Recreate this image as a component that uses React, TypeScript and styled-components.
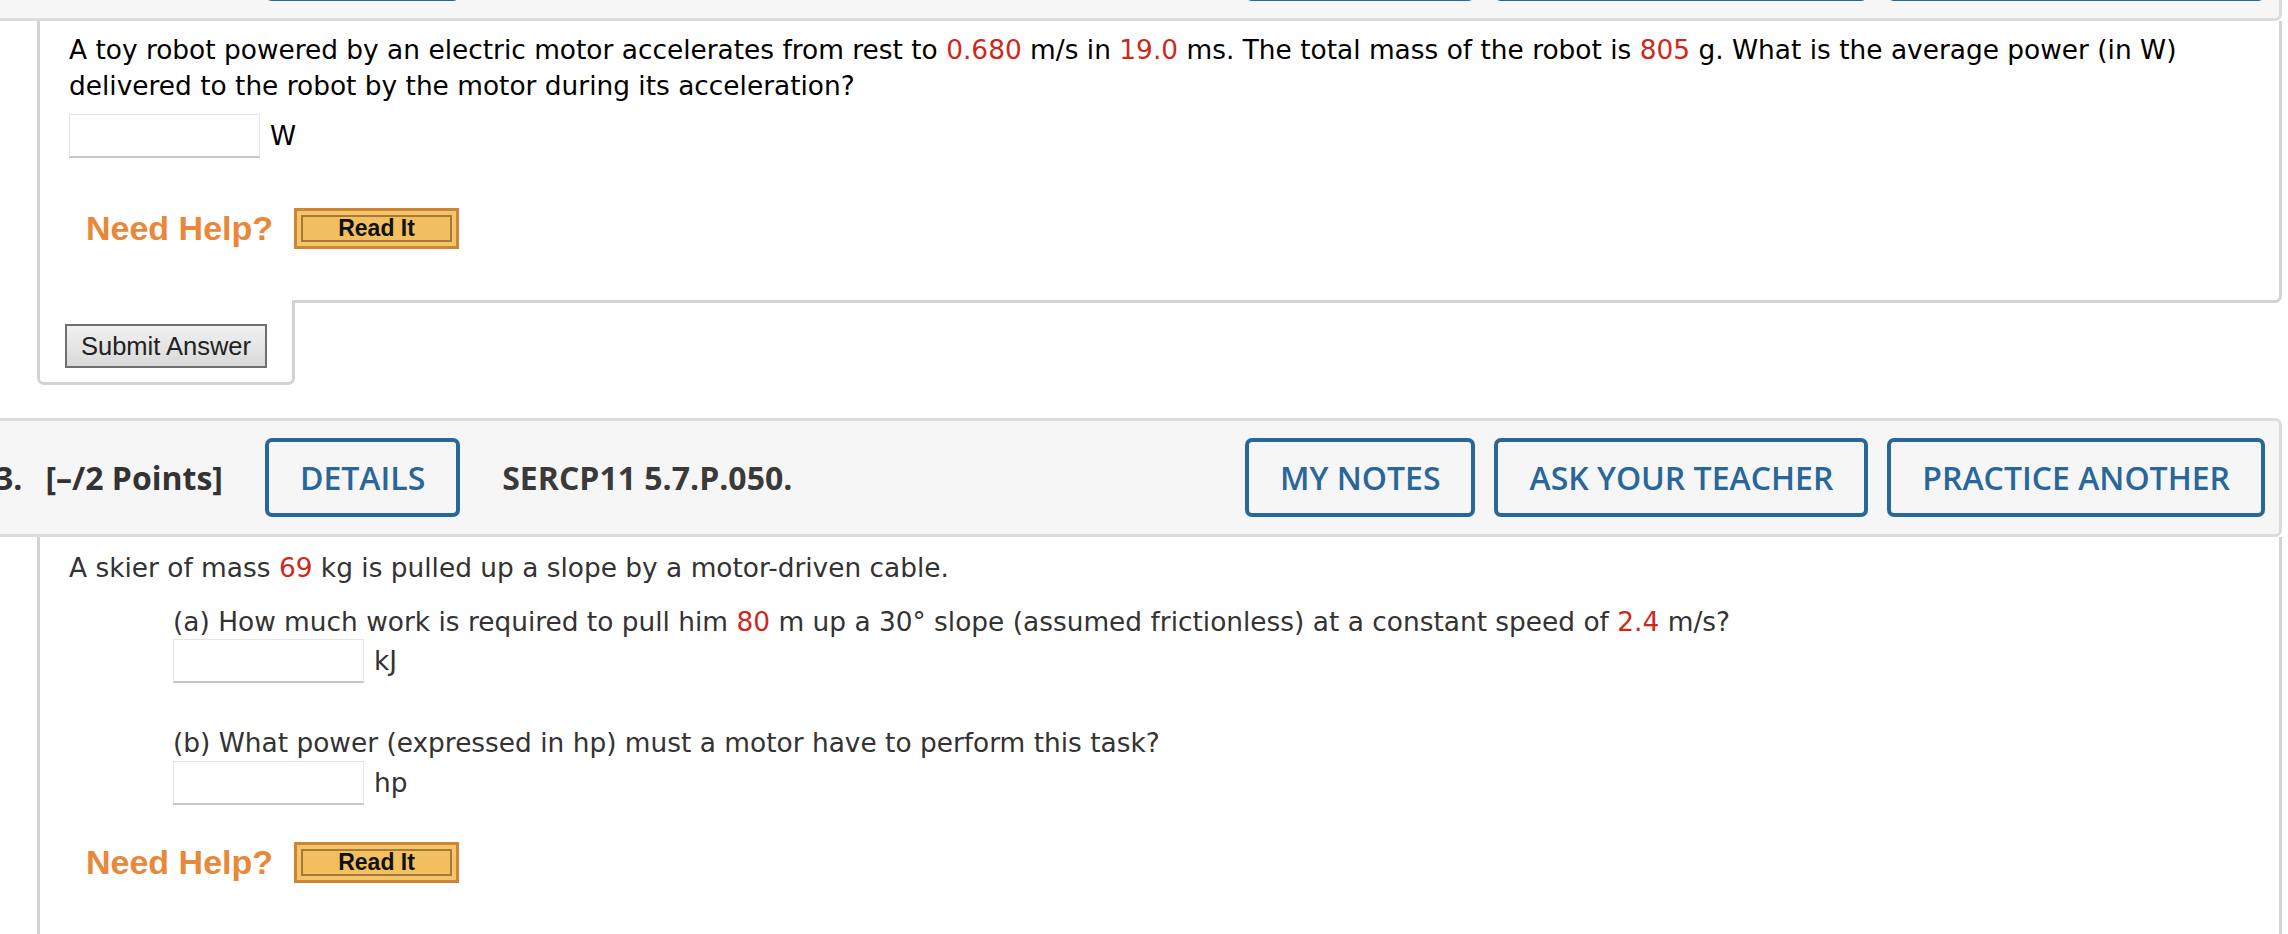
import { createGlobalStyle } from 'styled-components'
import styled from 'styled-components'

const BLUE = '#29669a'
const RED = '#d0271d'
const LINE = '#d3d3d3'
const BAND = '#dcdcdc'

const GlobalStyle = createGlobalStyle`
  html, body {
    margin: 0;
    padding: 0;
    background: #fff;
    overflow: hidden;
  }
  body {
    font-family: "DejaVu Sans", Verdana, sans-serif;
  }
`

const Page = styled.div`
  width: 2288px;
  height: 934px;
  overflow: hidden;
`

const Header = styled.div<{ $offset?: number }>`
  display: flex;
  align-items: center;
  height: 113px;
  margin-top: ${p => p.$offset ?? 0}px;
  margin-right: 6px;
  background: #f6f6f6;
  border: 3px solid ${BAND};
  border-left: none;
  border-radius: 0 7px 7px 0;
  font-family: "Open Sans", sans-serif;
  color: #333;
`

const QNumber = styled.span`
  margin-left: -5px;
  font-size: 32px;
  font-weight: 700;
  color: #333;
`

const Points = styled.span`
  margin-left: 23px;
  margin-right: 42px;
  font-size: 32px;
  font-weight: 700;
  color: #333;
`

const Code = styled.span`
  margin-left: 42px;
  font-size: 32px;
  font-weight: 700;
  color: #3a3a3a;
`

const Actions = styled.div`
  display: flex;
  gap: 19px;
  margin-left: auto;
  padding-right: 14px;
`

const HeadButton = styled.button`
  box-sizing: border-box;
  height: 79px;
  padding: 0 31px;
  background: transparent;
  border: 4px solid ${BLUE};
  border-radius: 7px;
  color: ${BLUE};
  font-family: "Open Sans", sans-serif;
  font-size: 32px;
  font-weight: 600;
  cursor: pointer;
`

const Body = styled.div<{ $top: number; $open?: boolean }>`
  margin-left: 37px;
  margin-right: 6px;
  padding: ${p => p.$top}px 28px 51px 29px;
  border-left: 3px solid ${LINE};
  border-right: 3px solid ${LINE};
  border-bottom: ${p => (p.$open ? 'none' : `3px solid ${LINE}`)};
  border-bottom-right-radius: ${p => (p.$open ? 0 : 7)}px;
  background: #fff;
`

const Prompt = styled.p<{ $dark?: boolean; $indent?: number; $gap?: number }>`
  margin: ${p => p.$gap ?? 0}px 0 0 ${p => p.$indent ?? 0}px;
  font-size: 26.4px;
  line-height: 36px;
  color: ${p => (p.$dark ? '#000' : '#333')};
`

const Val = styled.span`
  color: ${RED};
`

const AnswerRow = styled.div<{ $gap: number; $indent?: number; $dark?: boolean }>`
  display: flex;
  align-items: center;
  gap: 10px;
  margin: ${p => p.$gap}px 0 0 ${p => p.$indent ?? 0}px;
  font-size: 26.4px;
  line-height: 36px;
  color: ${p => (p.$dark ? '#000' : '#333')};
`

const AnswerBox = styled.input`
  box-sizing: border-box;
  width: 191px;
  height: 44px;
  margin: 0;
  border: 1px solid #e4e4e4;
  border-bottom: 2px solid #c6c6c6;
  background: #fff;
  outline: none;
`

const HelpRow = styled.div<{ $gap: number }>`
  display: flex;
  align-items: center;
  gap: 21px;
  margin-top: ${p => p.$gap}px;
  padding-left: 17px;
`

const HelpLabel = styled.span`
  font-family: "Liberation Sans", Arial, sans-serif;
  font-size: 34px;
  font-weight: 700;
  color: #e8883a;
`

const ReadIt = styled.button`
  box-sizing: border-box;
  width: 165px;
  height: 41px;
  padding: 0;
  border: 3px solid #cf8536;
  background: #f2c060;
  box-shadow: inset 0 0 0 4px #f4c668, inset 0 0 0 6px #a8773c;
  font-family: "Liberation Sans", Arial, sans-serif;
  font-size: 23px;
  font-weight: 700;
  color: #111;
  cursor: pointer;
`

const SubmitTab = styled.div`
  box-sizing: border-box;
  width: 258px;
  margin: -3px 0 0 37px;
  padding: 24px 0 14px 25px;
  background: #fff;
  border: 3px solid ${LINE};
  border-top: none;
  border-radius: 0 0 7px 7px;
`

const SubmitButton = styled.button`
  box-sizing: border-box;
  width: 202px;
  height: 44px;
  padding: 0;
  border: 2px solid #6f6f6f;
  background: linear-gradient(#f1f1f1, #d9d9d9);
  font-family: "Liberation Sans", Arial, sans-serif;
  font-size: 25.5px;
  color: #222;
  cursor: pointer;
`

const Spacer = styled.div`
  height: 33px;
`

function QuestionHeader({ num, points, code, offset }: { num: string; points: string; code: string; offset?: number }) {
  return (
    <Header $offset={offset}>
      <QNumber>{num}</QNumber>
      <Points>{points}</Points>
      <HeadButton>DETAILS</HeadButton>
      <Code>{code}</Code>
      <Actions>
        <HeadButton>MY NOTES</HeadButton>
        <HeadButton>ASK YOUR TEACHER</HeadButton>
        <HeadButton>PRACTICE ANOTHER</HeadButton>
      </Actions>
    </Header>
  )
}

function NeedHelp({ gap }: { gap: number }) {
  return (
    <HelpRow $gap={gap}>
      <HelpLabel>Need Help?</HelpLabel>
      <ReadIt>Read It</ReadIt>
    </HelpRow>
  )
}

export default function App() {
  return (
    <Page>
      <GlobalStyle />
      <QuestionHeader num="2." points="[–/1 Points]" code="SERCP11 5.7.P.035." offset={-98} />
      <Body $top={11}>
        <Prompt $dark>
          A toy robot powered by an electric motor accelerates from rest to <Val>0.680</Val> m/s in{' '}
          <Val>19.0</Val> ms. The total mass of the robot is <Val>805</Val> g. What is the average power (in W)
          delivered to the robot by the motor during its acceleration?
        </Prompt>
        <AnswerRow $gap={10} $dark>
          <AnswerBox />
          W
        </AnswerRow>
        <NeedHelp gap={50} />
      </Body>
      <SubmitTab>
        <SubmitButton>Submit Answer</SubmitButton>
      </SubmitTab>
      <Spacer />
      <QuestionHeader num="3." points="[–/2 Points]" code="SERCP11 5.7.P.050." />
      <Body $top={13} $open>
        <Prompt>
          A skier of mass <Val>69</Val> kg is pulled up a slope by a motor-driven cable.
        </Prompt>
        <Prompt $indent={104} $gap={18}>
          (a) How much work is required to pull him <Val>80</Val> m up a 30° slope (assumed frictionless) at a
          constant speed of <Val>2.4</Val> m/s?
        </Prompt>
        <AnswerRow $gap={-1} $indent={104}>
          <AnswerBox />
          kJ
        </AnswerRow>
        <Prompt $indent={104} $gap={42}>
          (b) What power (expressed in hp) must a motor have to perform this task?
        </Prompt>
        <AnswerRow $gap={0} $indent={104}>
          <AnswerBox />
          hp
        </AnswerRow>
        <NeedHelp gap={37} />
      </Body>
    </Page>
  )
}
